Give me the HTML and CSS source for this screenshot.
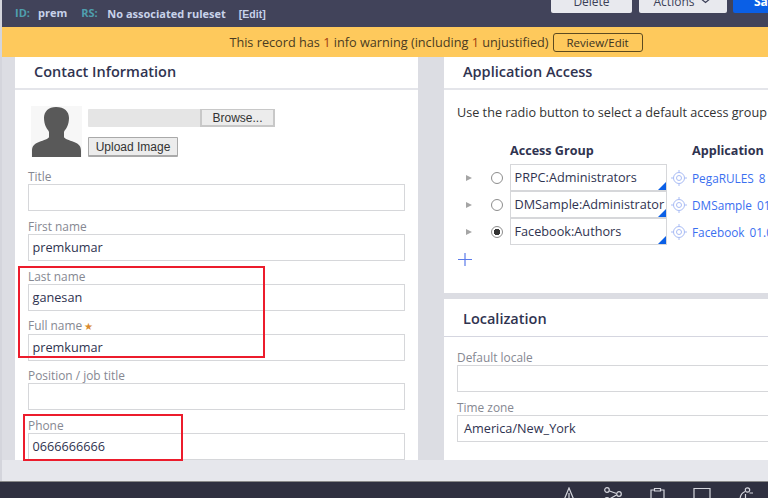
FILE: index.html
```html
<!DOCTYPE html>
<html lang="en">
<head>
<meta charset="utf-8">
<title>Operator</title>
<link rel="stylesheet" href="styles.css">
</head>
<body>
<div class="app">
  <header class="topbar">
    <div class="meta">
      <span class="key">ID:</span><span class="val">prem</span>
      <span class="key rs">RS:</span><span class="val low">No associated ruleset</span>
      <span class="edit">[Edit]</span>
    </div>
    <div class="actions">
      <button class="btn del">Delete</button>
      <button class="btn act">Actions<svg width="13" height="7" viewBox="0 0 13 7"><path d="M1 1l5.500 4.500L12 1" fill="none" stroke="#3b3f57" stroke-width="1.200"/></svg></button>
      <button class="btn save">Save</button>
    </div>
  </header>
  <div class="warn">
    <span>This record has <b class="n">1</b> info warning (including <b class="n">1</b> unjustified)</span>
    <button class="review">Review/Edit</button>
  </div>
  <main class="content">
    <section class="panel left">
      <h2 class="ptitle">Contact Information</h2>
      <div class="pbody lbody">
        <div class="photo">
          <svg class="avatar" width="51" height="51" viewBox="0 0 51 51">
            <rect width="51" height="51" fill="#f7f7f7"/>
            <path d="M25 1c-7.500 0-12 4.500-12 11 0 3 .7 6.500 2 9 1 2 2.500 3.500 3 5v5c-.5 2-5 3-10 5C3 38 1 40 1 45v6h49v-6c0-5-2-7-7-9-5-2-9.500-3-10-5v-5c.5-1.500 2-3 3-5 1.300-2.500 2-6 2-9 0-6.500-4.500-11-13-11z" fill="#595959"/>
          </svg>
          <div class="upload">
            <div class="file"><span class="fname"></span><button class="browse">Browse...</button></div>
            <button class="uploadbtn">Upload Image</button>
          </div>
        </div>
        <div class="field"><label>Title</label><div class="input"></div></div>
        <div class="field"><label>First name</label><div class="input">premkumar</div></div>
        <div class="field"><label>Last name</label><div class="input">ganesan</div></div>
        <div class="field"><label>Full name<span class="req">★</span></label><div class="input">premkumar</div></div>
        <div class="field"><label>Position / job title</label><div class="input"></div></div>
        <div class="field"><label>Phone</label><div class="input">0666666666</div></div>
      </div>
    </section>
    <div class="rightcol">
      <section class="panel access">
        <h2 class="ptitle">Application Access</h2>
        <div class="pbody">
          <p class="hint">Use the radio button to select a default access group</p>
          <div class="agrid">
            <span></span><span></span><b class="th">Access Group</b><b class="th thapp">Application</b>
            <span class="tri"></span><span class="radio"></span><div class="ag">PRPC:Administrators</div>
            <a class="app-link"><svg class="target" width="16" height="16" viewBox="0 0 16 16"><use href="#tg"/></svg>PegaRULES 8</a>
            <span class="tri"></span><span class="radio"></span><div class="ag">DMSample:Administrator</div>
            <a class="app-link"><svg class="target" width="16" height="16" viewBox="0 0 16 16"><use href="#tg"/></svg>DMSample 01</a>
            <span class="tri"></span><span class="radio on"></span><div class="ag">Facebook:Authors</div>
            <a class="app-link"><svg class="target" width="16" height="16" viewBox="0 0 16 16"><use href="#tg"/></svg>Facebook 01.01</a>
          </div>
          <svg class="plus" width="14" height="13" viewBox="0 0 14 13"><path d="M7 0v13M0 6.500h14" stroke="#5b7bea" stroke-width="1.200"/></svg>
        </div>
      </section>
      <section class="panel locale">
        <h2 class="ptitle">Localization</h2>
        <div class="pbody">
          <div class="field rf"><label>Default locale</label><div class="input"></div></div>
          <div class="field rf"><label>Time zone</label><div class="input">America/New_York</div></div>
        </div>
      </section>
    </div>
  </main>
  <div class="greybar"></div>
  <footer class="bottom">
    <svg class="i1" width="14" height="17" viewBox="0 0 14 17"><path d="M7 1L.8 16h12.400zM7 6v7" fill="none" stroke="#d5d6dd" stroke-width="1.200"/></svg>
    <svg width="18" height="17" viewBox="0 0 18 17"><circle cx="3" cy="3" r="2.300" fill="none" stroke="#d5d6dd" stroke-width="1.200"/><circle cx="15" cy="7" r="2.300" fill="none" stroke="#d5d6dd" stroke-width="1.200"/><circle cx="3" cy="13" r="2.300" fill="none" stroke="#d5d6dd" stroke-width="1.200"/><path d="M5.500 4l7 2.500M5.500 12l7-4" stroke="#d5d6dd" stroke-width="1.200"/></svg>
    <svg width="15" height="17" viewBox="0 0 15 17"><path d="M4.500 3H1v14h13V3h-3.500M4.500 4V1.500h6V4z" fill="none" stroke="#d5d6dd" stroke-width="1.200"/></svg>
    <svg width="18" height="17" viewBox="0 0 18 17"><path d="M1 17V1.500h16V17M5 16l3-3M5 12v4h4" fill="none" stroke="#d5d6dd" stroke-width="1.200"/></svg>
    <svg width="14" height="17" viewBox="0 0 14 17"><circle cx="8.500" cy="3" r="2.200" fill="none" stroke="#d5d6dd" stroke-width="1.200"/><path d="M6 4.500C2.500 6 1 9 1 13v4M10.500 6H14M6.500 7v10" fill="none" stroke="#d5d6dd" stroke-width="1.200"/></svg>
  </footer>
  <div class="mark m1"></div>
  <div class="mark m2"></div>
  <svg class="defs" width="0" height="0"><defs><g id="tg" fill="none" stroke="#a9bcf5"><circle cx="8" cy="8" r="5.500"/><circle cx="8" cy="8" r="2.500"/><path d="M8 0v2.500M8 13.500V16M0 8h2.500M13.500 8H16"/></g></defs></svg>
</div>
</body>
</html>
```

FILE: styles.css
```css
* { box-sizing: border-box; }
html, body { margin: 0; padding: 0; }
body { font-family: "Open Sans", sans-serif; color: #2f3350; background: #fff; }
.app { position: relative; width: 768px; height: 498px; overflow: hidden; padding-left: 2px; background: #d4d5dc; display: flex; flex-direction: column; }
.topbar { height: 27px; flex: none; background: #41435a; display: flex; justify-content: space-between; position: relative; }
.meta { display: flex; align-items: baseline; padding: 5px 0 0 13px; font-size: 11px; font-weight: 700; color: #c8d2ea; white-space: nowrap; }
.key { color: #4f9fae; width: 23px; }
.key.rs { width: 26px; margin-left: 14px; }
.val.low { position: relative; top: 1px; }
.edit { margin-left: 13px; font-family: "Liberation Sans", sans-serif; font-size: 10.500px; position: relative; top: 1px; }
.actions { position: absolute; right: -31px; top: -11px; display: flex; gap: 6px; }
.btn { height: 24px; border: 0; border-radius: 2px; background: #e8e9ee; color: #3b3f57; font: 400 12px "Open Sans", sans-serif; padding: 0; width: 81px; }
.btn.del { margin-right: 1px; }
.btn.act { width: 88px; }
.btn.act svg { margin-left: 5px; vertical-align: 2px; }
.btn.save { background: #0a5fe6; color: #fff; font-weight: 700; width: 66px; text-align: left; padding-left: 21px; }
.warn { height: 30px; flex: none; background: #fec95c; display: flex; align-items: center; justify-content: center; gap: 4px; font-size: 12.700px; color: #4a3b22; padding-left: 102px; }
.n { font-weight: 400; color: #a33b0e; }
.review { height: 19px; width: 90px; padding: 0; border: 1px solid #5c4a20; border-radius: 3px; background: transparent; color: #3b3222; font: 400 11.500px "Open Sans", sans-serif; }
.content { height: 403px; flex: none; padding-left: 13px; display: flex; gap: 26px; background: #dcdde3; overflow: hidden; }
.panel { background: #fff; }
.left { width: 403px; flex: none; }
.ptitle { margin: 0; height: 33px; border-bottom: 2px solid #e4e5ea; font-size: 14.500px; font-weight: 600; color: #2f3350; line-height: 30px; padding-left: 19px; }
.lbody { padding: 16px 13px 0; }
.photo { display: flex; gap: 6px; height: 52px; margin-left: 3px; margin-bottom: 11px; }
.avatar { display: block; flex: none; }
.upload { padding-top: 3px; display: flex; flex-direction: column; align-items: flex-start; gap: 10px; }
.file { display: flex; height: 18px; width: 187px; background: #e5e5e5; border-radius: 1px; }
.fname { width: 112px; }
.browse { flex: 1; padding: 0; border: 1px solid #c8c8c8; border-width: 1px 2px 2px; background: #ececec; color: #333; font: 12px "Liberation Sans", sans-serif; }
.uploadbtn { height: 20px; width: 90px; padding: 0; border: 1px solid #a9a9a9; border-bottom-width: 2px; background: #ececec; color: #333; font: 12px "Liberation Sans", sans-serif; border-radius: 1px; }
.field label { display: block; font-size: 11.900px; line-height: 15px; color: #868892; white-space: nowrap; }
.req { color: #d98a2e; font-size: 10px; margin-left: 2px; }
.input { height: 27px; border: 1px solid #d6d7da; background: #fff; font-size: 12.700px; line-height: 25px; padding-left: 3.500px; color: #2f3350; }
.field { height: 49.750px; }
.rightcol { width: 330px; flex: none; display: flex; flex-direction: column; gap: 6px; }
.access { height: 236px; flex: none; }
.locale { flex: 1; }
.access .pbody { padding: 12px 13px 0; }
.hint { margin: 0 0 20px; font-size: 12.650px; line-height: 20px; color: #333; white-space: nowrap; }
.agrid { display: grid; grid-template-columns: 20px 33px 157px 130px; grid-auto-rows: 27px; grid-template-rows: 22px; align-items: center; }
.th { font-size: 12.600px; line-height: 18px; align-self: start; font-weight: 700; color: #2f3350; white-space: nowrap; }
.thapp { padding-left: 25px; }
.tri { width: 0; height: 0; margin-left: 9px; border: 3.500px solid transparent; border-left: 6px solid #a5a5a5; border-right: 0; }
.radio { width: 12px; height: 12px; border-radius: 50%; border: 1px solid #8d8d8d; margin-left: 14px; background: #fff; display: block; }
.radio.on { background: radial-gradient(circle, #333 0 3px, #fff 3.500px); }
.ag { height: 27px; border: 1px solid #d6d7da; padding-left: 3.500px; font-size: 12.700px; line-height: 25px; overflow: hidden; white-space: nowrap; position: relative; color: #2f3350; }
.ag::after { content: ""; position: absolute; right: 0; bottom: 0; border: 4.500px solid transparent; border-right-color: #0a5fe6; border-bottom-color: #0a5fe6; }
.app-link { font-size: 11.800px; color: #3a6ff0; white-space: nowrap; display: flex; align-items: center; gap: 5px; padding-left: 4px; word-spacing: 2px; }
.target { flex: none; }
.plus { display: block; margin: 8px 0 0 1px; }
.locale .ptitle { height: 38px; line-height: 40px; border-bottom: 1px solid #d5d6e0; }
.locale .pbody { padding: 13px 13px 0; }
.rf { width: 330px; height: 50px; }
.rf .input { padding-left: 6px; }
.greybar { height: 21px; flex: none; background: #e6e7ec; }
.bottom { height: 17px; flex: none; margin-left: -2px; background: #2f3040; display: flex; justify-content: flex-end; gap: 28px; align-items: flex-start; padding: 5px 15px 0 0; border-top: 1px solid #888; }
.mark { position: absolute; border: 2px solid #ec1c2c; }
.m1 { left: 18px; top: 266px; width: 247px; height: 92px; }
.m2 { left: 23px; top: 414px; width: 160px; height: 47px; }
.defs { position: absolute; }
```
